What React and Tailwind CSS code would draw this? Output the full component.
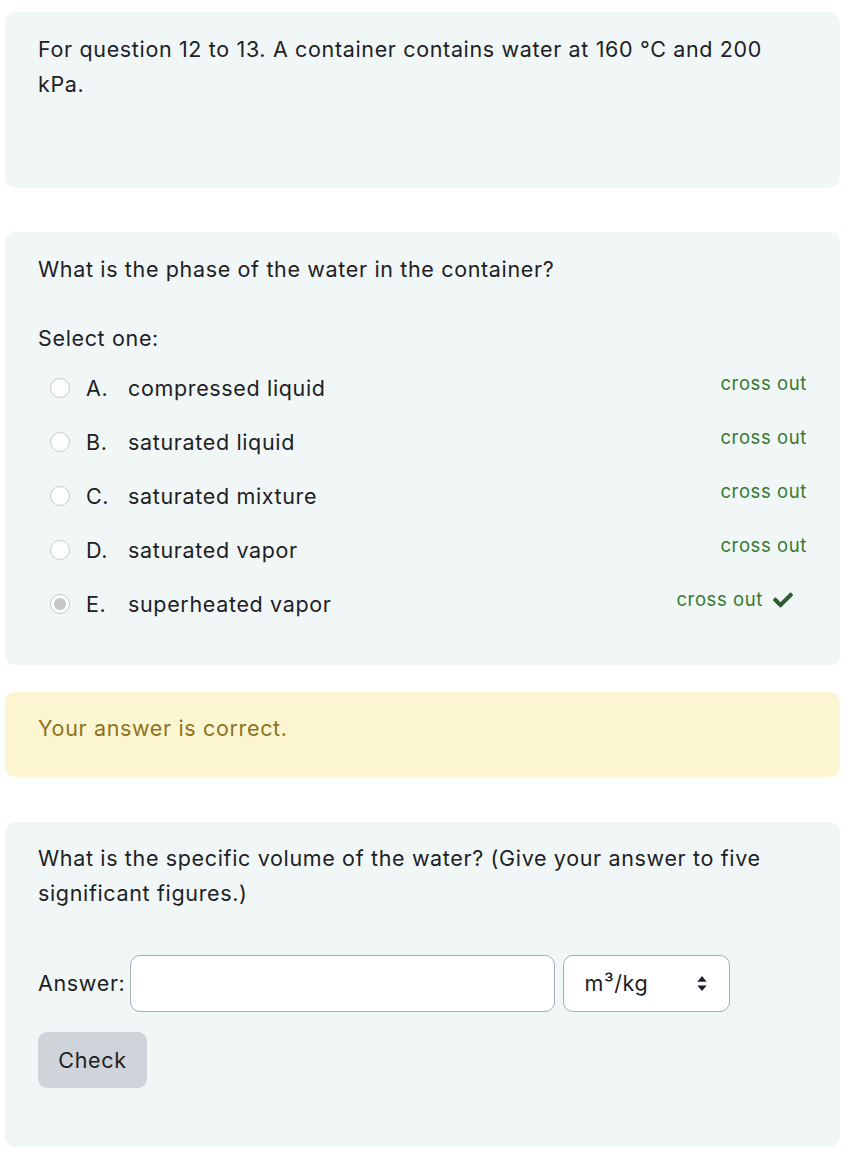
import { useState } from 'react'

const OPTIONS = [
  { key: 'A', label: 'compressed liquid' },
  { key: 'B', label: 'saturated liquid' },
  { key: 'C', label: 'saturated mixture' },
  { key: 'D', label: 'saturated vapor' },
  { key: 'E', label: 'superheated vapor', picked: true },
]

function Radio({ on }) {
  return (
    <span className="flex h-[20px] w-[20px] items-center justify-center rounded-full border border-[#c6c9cc] bg-white">
      {on && <span className="h-[12px] w-[12px] rounded-full bg-[#c4c6c8]" />}
    </span>
  )
}

function Tick() {
  return (
    <svg viewBox="0 0 512 512" className="h-[20px] w-[24px] fill-[#2f5d30]">
      <path d="M173.9 439.4l-166.4-166.4c-10-10-10-26.2 0-36.2l36.2-36.2c10-10 26.2-10 36.2 0L192 312.7 432.1 72.6c10-10 26.2-10 36.2 0l36.2 36.2c10 10 10 26.2 0 36.2L210.1 439.4c-10 10-26.2 10-36.2 0z" />
    </svg>
  )
}

function Option({ o }) {
  return (
    <div className="flex h-[54px] items-center">
      <div className="flex flex-1 items-center pl-[12px]">
        <Radio on={o.picked} />
        <span className="ml-[16px] w-[42px]">{o.key}.</span>
        <span>{o.label}</span>
      </div>
      <div className={`flex items-center gap-[8px] self-start pt-[5px] text-[18.5px] tracking-[0.6px] text-[#357a32] ${o.picked ? 'pr-[12px]' : ''}`}>
        <span>cross out</span>
        {o.picked && <Tick />}
      </div>
    </div>
  )
}

export default function App() {
  const [val, setVal] = useState('')
  return (
    <div className="min-h-[1154px] bg-white pt-[12px] text-[21.5px] leading-[35px] tracking-[0.65px] text-[#1d2125]" style={{ fontFamily: 'Inter, "Noto Sans", sans-serif' }}>
      <div className="ml-[5px] w-[835px]">
        <div className="h-[176px] rounded-[10px] bg-[#f1f7f7] px-[33px] pt-[20px]">
          For question 12 to 13. A container contains water at 160 °C and 200 kPa.
        </div>

        <div className="mt-[44px] rounded-[10px] bg-[#f1f7f7] pb-[34px] pl-[33px] pr-[33px] pt-[20px]">
          <p>What is the phase of the water in the container?</p>
          <p className="mt-[34px]">Select one:</p>
          <div className="mt-[5px]">
            {OPTIONS.map((o) => (
              <Option key={o.key} o={o} />
            ))}
          </div>
        </div>

        <div className="mt-[27px] h-[85px] rounded-[10px] bg-[#fcf5d2] px-[33px] pt-[19px] text-[#8c7320]">
          Your answer is correct.
        </div>

        <div className="mt-[45px] h-[325px] rounded-[10px] bg-[#f1f7f7] px-[33px] pt-[19px]">
          <p>What is the specific volume of the water? (Give your answer to five significant figures.)</p>
          <div className="mt-[44px] flex items-center">
            <label htmlFor="ans" className="mr-[5px]">Answer:</label>
            <input
              id="ans"
              value={val}
              onChange={(e) => setVal(e.target.value)}
              className="h-[57px] w-[425px] rounded-[10px] border border-[#a9aeb3] bg-white px-[14px] outline-none"
            />
            <div className="ml-[8px] flex h-[57px] w-[167px] items-center justify-between rounded-[10px] border border-[#a9aeb3] bg-white pl-[20px] pr-[22px]">
              <span>m³/kg</span>
              <svg viewBox="0 0 10 16" className="h-[15px] w-[10px] fill-[#1d2125]">
                <path d="M5 0 L10 6 H0 Z" />
                <path d="M0 10 H10 L5 16 Z" />
              </svg>
            </div>
          </div>
          <button className="mt-[20px] h-[56px] w-[109px] rounded-[9px] bg-[#ced4da] text-[#1d2125]">
            Check
          </button>
        </div>
      </div>
    </div>
  )
}
